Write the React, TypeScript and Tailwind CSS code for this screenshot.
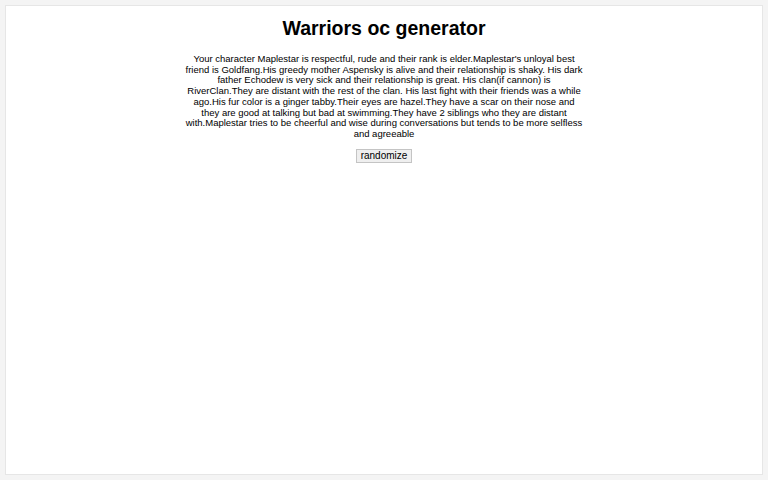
const lines = [
  "Your character Maplestar is respectful, rude and their rank is elder.Maplestar's unloyal best",
  "friend is Goldfang.His greedy mother Aspensky is alive and their relationship is shaky. His dark",
  "father Echodew is very sick and their relationship is great. His clan(if cannon) is",
  "RiverClan.They are distant with the rest of the clan. His last fight with their friends was a while",
  "ago.His fur color is a ginger tabby.Their eyes are hazel.They have a scar on their nose and",
  "they are good at talking but bad at swimming.They have 2 siblings who they are distant",
  "with.Maplestar tries to be cheerful and wise during conversations but tends to be more selfless",
  "and agreeable",
];

export default function App() {
  return (
    <div className="min-h-screen bg-[#f4f4f4] p-[5px]" style={{ fontFamily: '"Liberation Sans", Arial, sans-serif' }}>
      <div className="h-[470px] border border-[#e6e6e6] bg-white text-black">
        <div className="flex flex-col items-center">
          <h1 className="mt-[10px] text-[19.5px] font-bold leading-[24px]">Warriors oc generator</h1>
          <p className="mt-[14px] w-[430px] text-center text-[9.5px] leading-[10.7px] text-black">
            {lines.map((line, i) => (
              <span key={i} className="block whitespace-nowrap">
                {line}
              </span>
            ))}
          </p>
          <button className="mt-[9px] border border-[#c4c4c4] bg-[#efefef] px-[4px] text-[10px] leading-[12px] text-black">
            randomize
          </button>
        </div>
      </div>
    </div>
  );
}
